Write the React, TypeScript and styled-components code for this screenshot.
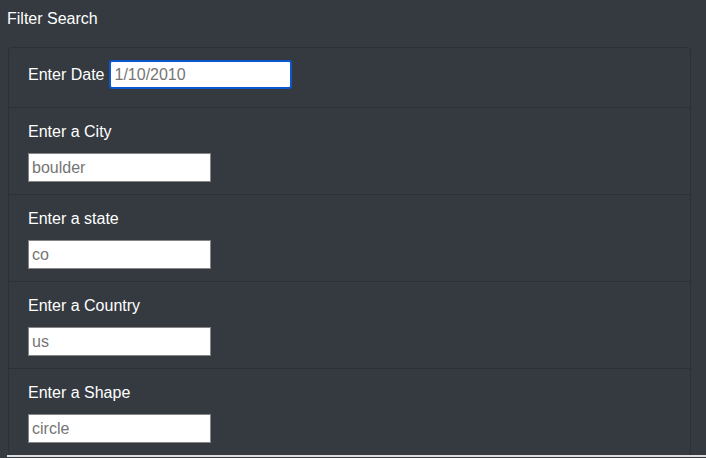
import React from "react";
import styled, { createGlobalStyle } from "styled-components";

const GlobalStyle = createGlobalStyle`
  html, body {
    margin: 0;
    padding: 0;
    background: #343a40;
  }
  body {
    font-family: "Liberation Sans", Arial, sans-serif;
    color: #ffffff;
    font-size: 16px;
    line-height: 24px;
  }
`;

const Page = styled.div`
  height: 458px;
  overflow: hidden;
  background: #343a40;
`;

const Heading = styled.div`
  padding: 7px 0 0 7px;
  height: 47px;
  box-sizing: border-box;
  font-size: 16px;
  line-height: 24px;
`;

const Card = styled.div`
  margin: 0 15px 0 8px;
  border: 1px solid rgba(0, 0, 0, 0.15);
  border-radius: 4px;
  background: #343a40;
`;

const Row = styled.div<{ $inline?: boolean }>`
  display: flex;
  flex-direction: ${(p) => (p.$inline ? "row" : "column")};
  align-items: ${(p) => (p.$inline ? "center" : "flex-start")};
  padding: ${(p) => (p.$inline ? "12px 19px 18px" : "12px 19px")};
  border-top: ${(p) => (p.$inline ? "none" : "1px solid rgba(0, 0, 0, 0.15)")};
`;

const Label = styled.label<{ $inline?: boolean }>`
  display: block;
  line-height: 24px;
  margin: ${(p) => (p.$inline ? "0 5px 0 0" : "0 0 9px 0")};
`;

const Input = styled.input<{ $focused?: boolean }>`
  box-sizing: border-box;
  width: 183px;
  height: 29px;
  padding: 1px 3px;
  font-family: "Liberation Sans", Arial, sans-serif;
  font-size: 16px;
  color: #000;
  background: #ffffff;
  border: ${(p) => (p.$focused ? "2px solid #0b57d0" : "1px solid #858585")};
  border-radius: ${(p) => (p.$focused ? "3px" : "0")};
  outline: none;

  &::placeholder {
    color: #757575;
  }
`;

const BottomLine = styled.div`
  position: relative;
  margin: -1px 0 0 7px;
  height: 2px;
  background: #dcdcdc;
`;

const fields = [
  { label: "Enter a City", placeholder: "boulder" },
  { label: "Enter a state", placeholder: "co" },
  { label: "Enter a Country", placeholder: "us" },
  { label: "Enter a Shape", placeholder: "circle" },
];

export default function App() {
  return (
    <Page>
      <GlobalStyle />
      <Heading>Filter Search</Heading>
      <Card>
        <Row $inline>
          <Label $inline>Enter Date</Label>
          <Input $focused placeholder="1/10/2010" />
        </Row>
        {fields.map((f) => (
          <Row key={f.label}>
            <Label>{f.label}</Label>
            <Input placeholder={f.placeholder} />
          </Row>
        ))}
      </Card>
      <BottomLine />
    </Page>
  );
}
